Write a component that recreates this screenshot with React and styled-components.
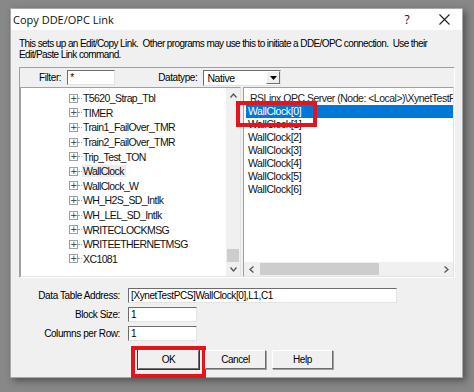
import React from "react";
import styled, { createGlobalStyle } from "styled-components";

const GlobalStyle = createGlobalStyle`
  html, body {
    margin: 0;
    padding: 0;
    background: #888888;
  }
  body {
    font-family: "Liberation Sans", Arial, sans-serif;
  }
`;

const treeItems = [
  "T5620_Strap_Tbl",
  "TIMER",
  "Train1_FailOver_TMR",
  "Train2_FailOver_TMR",
  "Trip_Test_TON",
  "WallClock",
  "WallClock_W",
  "WH_H2S_SD_Intlk",
  "WH_LEL_SD_Intlk",
  "WRITECLOCKMSG",
  "WRITEETHERNETMSG",
  "XC1081",
];

const listItems = [0, 1, 2, 3, 4, 5, 6].map((n) => "WallClock[" + n + "]");

function App() {
  return (
    <Page>
      <GlobalStyle />
      <Dialog>
        <TitleBar>
          <Title>Copy DDE/OPC Link</Title>
          <TitleButton width={38}>?</TitleButton>
          <TitleButton width={36}>
            <svg width="11" height="11" viewBox="0 0 11 11">
              <path d="M0.5 0.5 L10.5 10.5 M10.5 0.5 L0.5 10.5" stroke="#222" strokeWidth="1.1" />
            </svg>
          </TitleButton>
        </TitleBar>
        <Body>
          <Description>
            This sets up an Edit/Copy Link.&nbsp; Other programs may use this to initiate a DDE/OPC connection.&nbsp; Use their
            <br />
            Edit/Paste Link command.
          </Description>
          <Frame>
            <FilterRow>
              <Label>Filter:</Label>
              <TextBox width={48}>*</TextBox>
              <Label gap={37}>Datatype:</Label>
              <Select>
                <span>Native</span>
                <DropButton>
                  <svg width="7" height="4" viewBox="0 0 7 4">
                    <path d="M0 0 H7 L3.5 4 Z" fill="#000" />
                  </svg>
                </DropButton>
              </Select>
            </FilterRow>
            <Panes>
              <TreePane>
                <TreeList>
                  {treeItems.map((name) => (
                    <TreeRow key={name}>
                      <PlusBox>+</PlusBox>
                      <Dots />
                      <TreeText current={name === "WallClock"}>{name}</TreeText>
                    </TreeRow>
                  ))}
                </TreeList>
                <VScroll>
                  <ArrowCell>
                    <svg width="7" height="5" viewBox="0 0 7 5">
                      <path d="M0.5 4.5 L3.5 1 L6.5 4.5" fill="none" stroke="#555" strokeWidth="1.3" />
                    </svg>
                  </ArrowCell>
                  <VTrack>
                    <VThumb />
                  </VTrack>
                  <ArrowCell>
                    <svg width="7" height="5" viewBox="0 0 7 5">
                      <path d="M0.5 0.5 L3.5 4 L6.5 0.5" fill="none" stroke="#555" strokeWidth="1.3" />
                    </svg>
                  </ArrowCell>
                </VScroll>
              </TreePane>
              <ListPane>
                <ListBody>
                  <ListHeader>RSLinx OPC Server (Node: &lt;Local&gt;)\XynetTestPCS</ListHeader>
                  {listItems.map((item, idx) => (
                    <ListRow key={item} selected={idx === 0}>
                      {item}
                    </ListRow>
                  ))}
                </ListBody>
                <HScroll>
                  <ArrowCell>
                    <svg width="5" height="7" viewBox="0 0 5 7">
                      <path d="M4.5 0.5 L1 3.5 L4.5 6.5" fill="none" stroke="#555" strokeWidth="1.3" />
                    </svg>
                  </ArrowCell>
                  <HTrack>
                    <HThumb />
                  </HTrack>
                  <ArrowCell>
                    <svg width="5" height="7" viewBox="0 0 5 7">
                      <path d="M0.5 0.5 L4 3.5 L0.5 6.5" fill="none" stroke="#555" strokeWidth="1.3" />
                    </svg>
                  </ArrowCell>
                </HScroll>
              </ListPane>
              <Highlight style={{ left: 216, top: 14, width: 81, height: 26 }} />
            </Panes>
          </Frame>
          <Fields>
            <FieldLabel>Data Table Address:</FieldLabel>
            <TextBox width={269}>[XynetTestPCS]WallClock[0],L1,C1</TextBox>
            <FieldLabel>Block Size:</FieldLabel>
            <TextBox width={69}>1</TextBox>
            <FieldLabel>Columns per Row:</FieldLabel>
            <TextBox width={69}>1</TextBox>
          </Fields>
          <Buttons>
            <Button isDefault>
              OK
              <Highlight style={{ left: -8, top: -5, width: 75, height: 32 }} />
            </Button>
            <Button>Cancel</Button>
            <Button>Help</Button>
          </Buttons>
        </Body>
      </Dialog>
    </Page>
  );
}

export default App;

const Page = styled.div`
  width: 474px;
  height: 392px;
  padding: 8px 0 0 10px;
  box-sizing: border-box;
  overflow: hidden;
`;

const Dialog = styled.div`
  width: 453px;
  height: 370px;
  background: #f0f0f0;
  border: 1px solid #a8a8a8;
  box-sizing: border-box;
  box-shadow: 3px 3px 7px rgba(30, 30, 30, 0.5);
  display: flex;
  flex-direction: column;
`;

const TitleBar = styled.div`
  height: 21px;
  background: #ffffff;
  display: flex;
  align-items: center;
  padding-left: 2px;
  font-family: "Open Sans", "Liberation Sans", sans-serif;
  font-size: 11px;
  color: #111;
`;

const Title = styled.div`
  flex: 1;
`;

const TitleButton = styled.div`
  width: ${(p) => p.width}px;
  height: 21px;
  display: flex;
  align-items: center;
  justify-content: center;
  font-size: 12px;
`;

const Body = styled.div`
  flex: 1;
  padding: 8px 8px 0 8px;
  font-size: 10px;
  letter-spacing: -0.4px;
  color: #000;
`;

const Description = styled.div`
  line-height: 11px;
  letter-spacing: -0.6px;
  white-space: nowrap;
  margin-bottom: 7px;
`;

const Frame = styled.div`
  width: 436px;
  border-top: 1px solid #a0a0a0;
  border-left: 1px solid #a0a0a0;
  border-right: 1px solid #ffffff;
  border-bottom: 1px solid #ffffff;
  box-sizing: border-box;
`;

const FilterRow = styled.div`
  height: 19px;
  display: flex;
  align-items: center;
  padding-left: 19px;
  gap: 6px;
`;

const Label = styled.span`
  margin-left: ${(p) => p.gap || 0}px;
`;

const TextBox = styled.div`
  width: ${(p) => p.width}px;
  height: 15px;
  background: #fff;
  border-top: 1px solid #6d6d6d;
  border-left: 1px solid #6d6d6d;
  border-right: 1px solid #e3e3e3;
  border-bottom: 1px solid #e3e3e3;
  box-sizing: border-box;
  line-height: 14px;
  padding-left: 2px;
  white-space: nowrap;
`;

const Select = styled.div`
  width: 78px;
  height: 16px;
  background: #fff;
  border-top: 1px solid #6d6d6d;
  border-left: 1px solid #6d6d6d;
  border-right: 1px solid #e3e3e3;
  border-bottom: 1px solid #e3e3e3;
  box-sizing: border-box;
  display: flex;
  align-items: center;
  justify-content: space-between;
  padding-left: 3px;
  font-size: 10.5px;
`;

const DropButton = styled.div`
  width: 14px;
  height: 13px;
  background: #f0f0f0;
  border: 1px solid #fff;
  border-right-color: #6d6d6d;
  border-bottom-color: #6d6d6d;
  box-sizing: border-box;
  display: flex;
  align-items: center;
  justify-content: center;
`;

const Panes = styled.div`
  position: relative;
  display: flex;
  gap: 2px;
  height: 190px;
`;

const Sunken = styled.div`
  background: #fff;
  border-top: 1px solid #a0a0a0;
  border-left: 1px solid #a0a0a0;
  border-right: 1px solid #e3e3e3;
  border-bottom: 1px solid #e3e3e3;
  box-sizing: border-box;
  overflow: hidden;
`;

const TreePane = styled(Sunken)`
  width: 221px;
  display: flex;
`;

const TreeList = styled.div`
  flex: 1;
  padding: 3px 0 0 48px;
`;

const TreeRow = styled.div`
  height: 14.6px;
  display: flex;
  align-items: center;
`;

const PlusBox = styled.div`
  width: 9px;
  height: 9px;
  border: 1px solid #a0a0a0;
  box-sizing: border-box;
  font-size: 9px;
  line-height: 6px;
  letter-spacing: 0;
  text-align: center;
  color: #333;
  font-family: "DejaVu Sans", sans-serif;
`;

const Dots = styled.div`
  width: 4px;
  border-top: 1px dotted #a0a0a0;
`;

const TreeText = styled.span`
  font-size: 10.5px;
  letter-spacing: -0.6px;
  padding: 0 2px 0 1px;
  background: ${(p) => (p.current ? "#ececec" : "transparent")};
  color: #111;
  white-space: nowrap;
`;

const VScroll = styled.div`
  width: 14px;
  background: #f0f0f0;
  display: flex;
  flex-direction: column;
`;

const ArrowCell = styled.div`
  width: 14px;
  height: 14px;
  flex: none;
  display: flex;
  align-items: center;
  justify-content: center;
`;

const VTrack = styled.div`
  flex: 1;
  display: flex;
  flex-direction: column;
  justify-content: flex-end;
`;

const VThumb = styled.div`
  height: 13px;
  background: #cdcdcd;
  margin: 0 1px;
`;

const ListPane = styled(Sunken)`
  flex: 1;
  display: flex;
  flex-direction: column;
`;

const ListBody = styled.div`
  flex: 1;
  padding: 3px 0 0 2px;
`;

const ListHeader = styled.div`
  font-size: 10.5px;
  letter-spacing: -0.5px;
  white-space: nowrap;
  padding-left: 4px;
  height: 14px;
  line-height: 14px;
  color: #222;
`;

const ListRow = styled.div`
  height: 13px;
  line-height: 13px;
  font-size: 10.5px;
  padding-left: 2px;
  background: ${(p) => (p.selected ? "#0078d7" : "transparent")};
  color: ${(p) => (p.selected ? "#fff" : "#111")};
`;

const HScroll = styled.div`
  height: 14px;
  background: #f0f0f0;
  display: flex;
  align-items: center;
`;

const HTrack = styled.div`
  flex: 1;
  height: 14px;
  display: flex;
  align-items: center;
`;

const HThumb = styled.div`
  width: 119px;
  height: 12px;
  margin-left: 2px;
  background: #cdcdcd;
`;

const Highlight = styled.div`
  position: absolute;
  border: 4px solid #e3141c;
  box-sizing: border-box;
  pointer-events: none;
`;

const Fields = styled.div`
  display: grid;
  grid-template-columns: 101px auto;
  justify-content: start;
  column-gap: 8px;
  row-gap: 4px;
  margin-top: 10px;
`;

const FieldLabel = styled.div`
  text-align: right;
  line-height: 15px;
  white-space: nowrap;
`;

const Buttons = styled.div`
  display: flex;
  gap: 6px;
  margin-top: 9px;
  padding-left: 119px;
`;

const Button = styled.div`
  position: relative;
  width: 61px;
  height: 19px;
  box-sizing: border-box;
  background: #f0f0f0;
  border: 1px solid #fff;
  border-right-color: #6d6d6d;
  border-bottom-color: #6d6d6d;
  box-shadow: ${(p) => (p.isDefault ? "0 0 0 1px #333" : "1px 1px 0 #a0a0a0")};
  display: flex;
  align-items: center;
  justify-content: center;
`;
